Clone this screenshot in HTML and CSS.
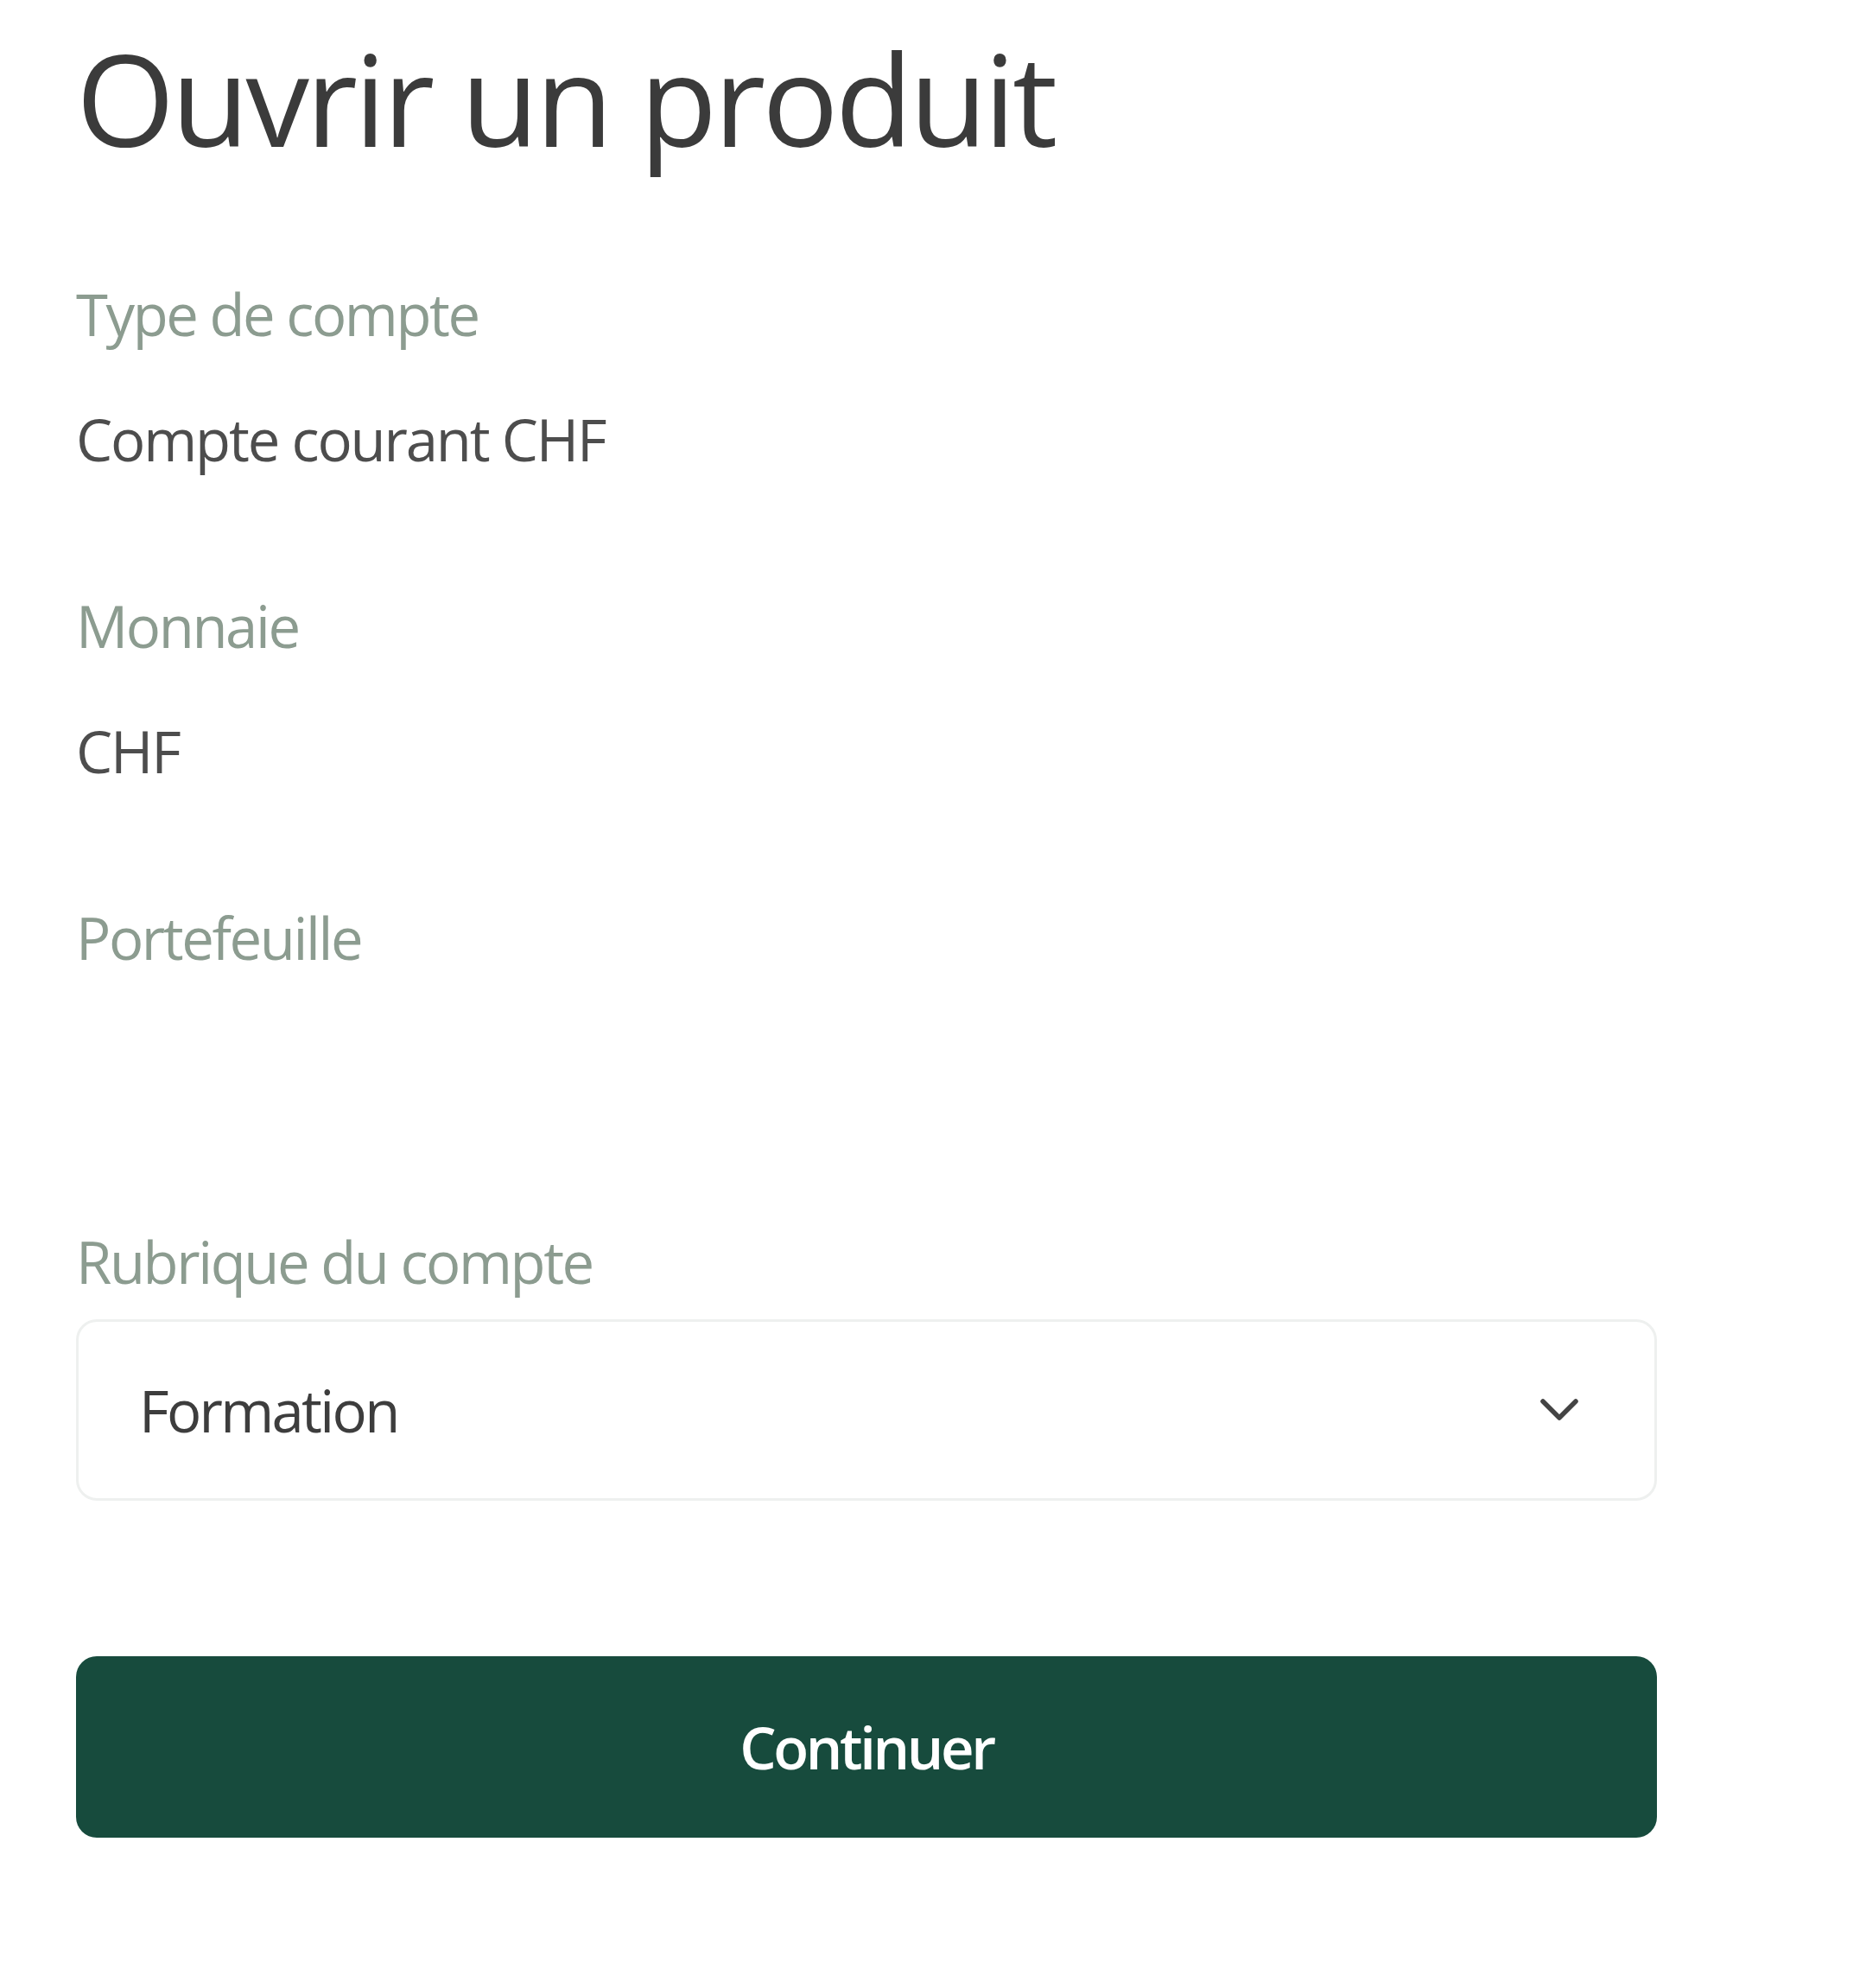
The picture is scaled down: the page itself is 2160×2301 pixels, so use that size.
FILE: index.html
```html
<!DOCTYPE html>
<html lang="fr">
<head>
<meta charset="utf-8">
<title>Ouvrir un produit</title>
<link rel="stylesheet" href="styles.css">
</head>
<body>
<main class="page">
  <h1 class="title">Ouvrir un produit</h1>

  <div class="field">
    <div class="label">Type de compte</div>
    <div class="value">Compte courant CHF</div>
  </div>

  <div class="field">
    <div class="label">Monnaie</div>
    <div class="value">CHF</div>
  </div>

  <div class="field">
    <div class="label">Portefeuille</div>
    <div class="value value-empty"></div>
  </div>

  <div class="field field-select">
    <div class="label">Rubrique du compte</div>
    <div class="select">
      <span class="select-text">Formation</span>
      <svg class="chevron" width="48" height="32" viewBox="0 0 48 32" aria-hidden="true">
        <polyline points="5,6 24,25 43,6" fill="none" stroke="#444444" stroke-width="5.5" stroke-linecap="round" stroke-linejoin="round"/>
      </svg>
    </div>
  </div>

  <button class="btn" type="button">Continuer</button>
</main>
</body>
</html>
```

FILE: styles.css
```css
html, body {
  margin: 0;
  padding: 0;
  background: #ffffff;
}

body {
  font-family: "Open Sans", "Noto Sans", "DejaVu Sans", sans-serif;
}

.page {
  width: 1830px;
  padding: 25px 0 0 88px;
  display: flex;
  flex-direction: column;
}

.title {
  margin: 0 0 122px 0;
  font-size: 147px;
  line-height: 176px;
  font-weight: 400;
  color: #3b3b3b;
  letter-spacing: -0.027em;
}

.field {
  display: flex;
  flex-direction: column;
  margin-bottom: 136px;
}

.label {
  font-size: 67px;
  line-height: 80px;
  color: #8c9c90;
  letter-spacing: -0.036em;
}

.value {
  margin-top: 65px;
  font-size: 67px;
  line-height: 80px;
  color: #4d4d4d;
  letter-spacing: -0.032em;
}

.value-empty {
  min-height: 94px;
}

.field-select {
  margin-bottom: 180px;
}

.select {
  margin-top: 27px;
  box-sizing: border-box;
  height: 210px;
  border: 3px solid #eef0ef;
  border-radius: 24px;
  display: flex;
  align-items: center;
  justify-content: space-between;
  padding: 0 86px 0 70px;
}

.select-text {
  font-size: 67px;
  font-weight: 500;
  color: #3d3d3d;
  letter-spacing: -0.04em;
}

.chevron {
  display: block;
}

.btn {
  box-sizing: border-box;
  width: 100%;
  height: 210px;
  border: none;
  border-radius: 24px;
  background: #174b3d;
  color: #ffffff;
  font-family: "Open Sans", "Noto Sans", sans-serif;
  font-size: 67px;
  font-weight: 600;
  letter-spacing: -0.05em;
  padding: 0;
}
```
